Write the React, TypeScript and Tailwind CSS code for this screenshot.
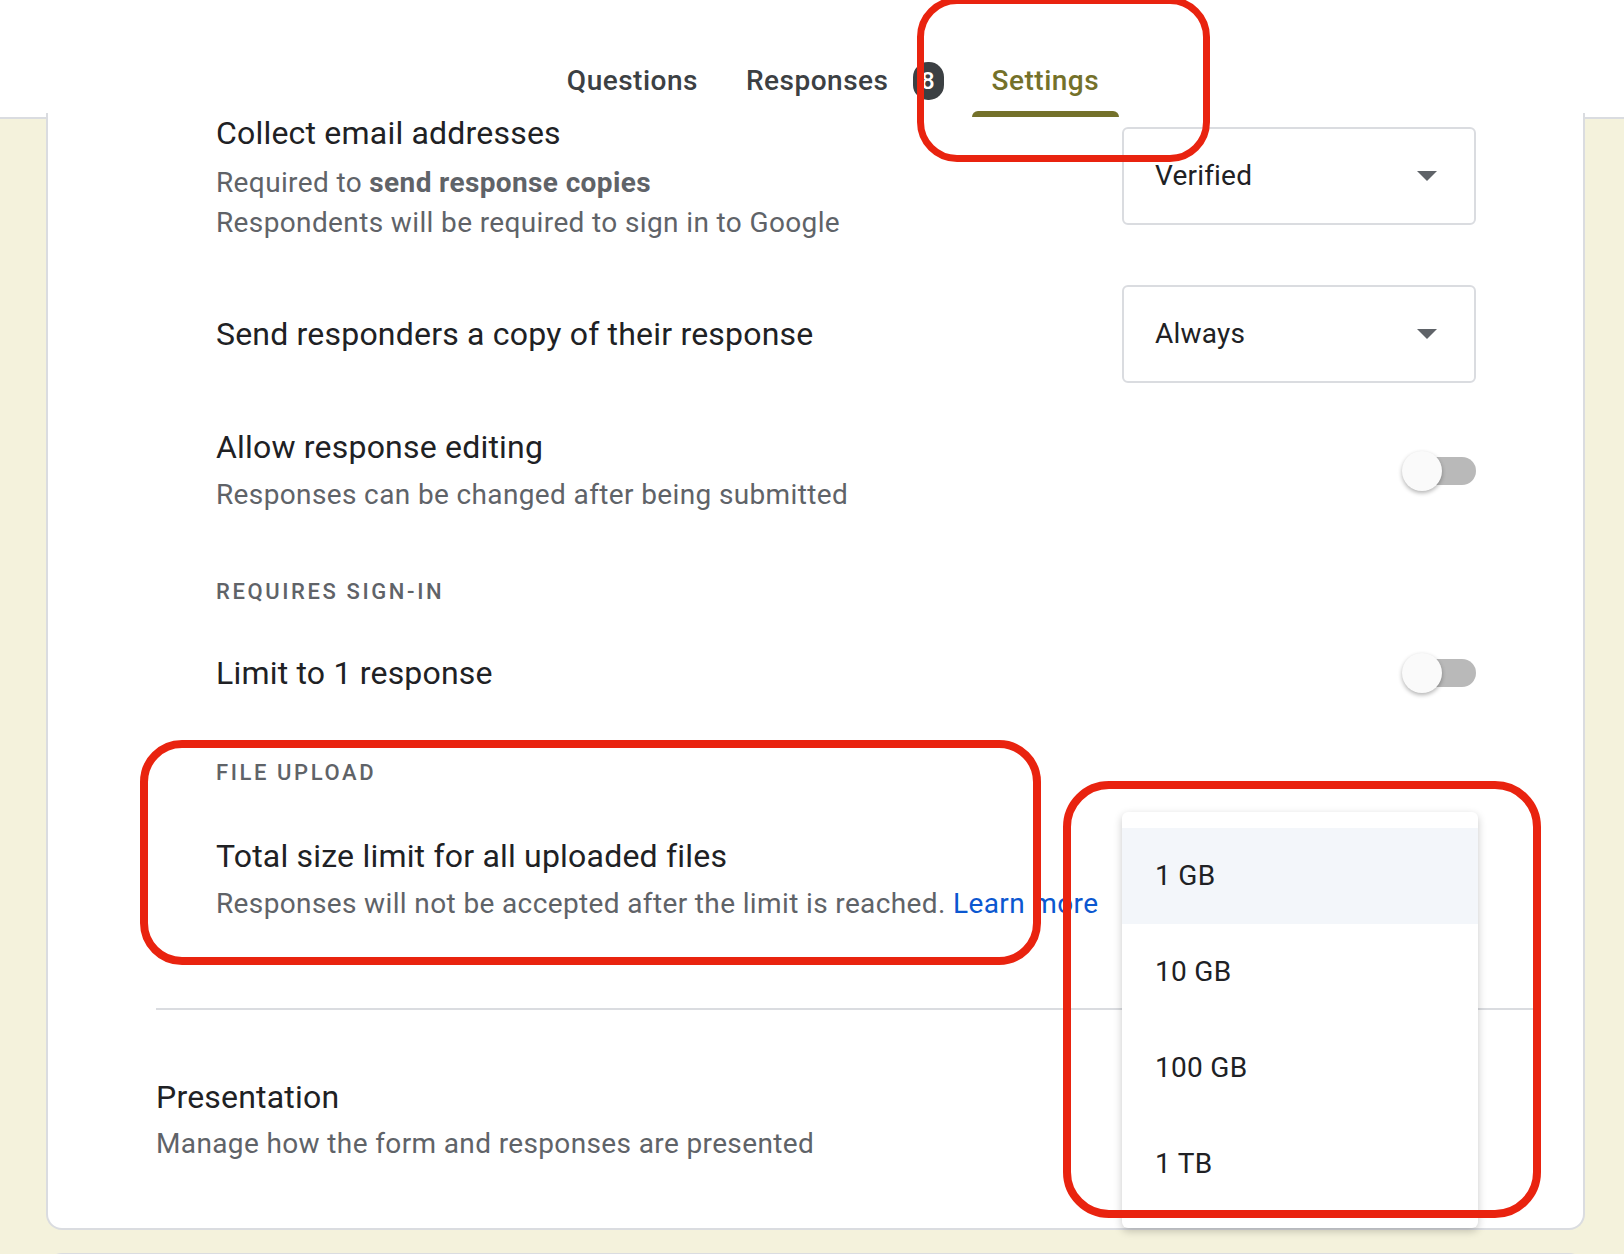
import React from "react";

function Dropdown({ value }: { value: string }) {
  return (
    <div className="flex h-[98px] w-[354px] items-center justify-between rounded-[6px] border-2 border-[#dadce0] bg-white pl-[31px] pr-[37px]">
      <span className="text-[28px] tracking-[0.2px] text-[#202124]">{value}</span>
      <svg width="20" height="10" viewBox="0 0 20 10">
        <path d="M0 0 L20 0 L10 10 Z" fill="#5f6368" />
      </svg>
    </div>
  );
}

function Toggle() {
  return (
    <div className="relative h-[40px] w-[74px] shrink-0">
      <div className="absolute left-[6px] top-[6px] h-[28px] w-[68px] rounded-full bg-[#b9b9b9]" />
      <div className="absolute left-0 top-0 h-[40px] w-[40px] rounded-full bg-[#fafafa] shadow-[0_2px_4px_rgba(0,0,0,0.3)]" />
    </div>
  );
}

function SectionLabel({ children, className }: { children: React.ReactNode; className: string }) {
  return (
    <div className={`text-[22px] font-medium uppercase leading-[30px] tracking-[2.6px] text-[#5f6368] ${className}`}>
      {children}
    </div>
  );
}

const title = "text-[32px] leading-[40px] tracking-[0.2px] text-[#202124]";
const sub = "text-[28px] leading-[40px] tracking-[0.37px] text-[#5f6368]";

const menuItems = ["1 GB", "10 GB", "100 GB", "1 TB"];

export default function App() {
  return (
    <div className="relative h-[1254px] overflow-hidden bg-[#f4f2dc] font-['Roboto',sans-serif]">
      {/* tab bar */}
      <header className="flex h-[119px] justify-center border-b-2 border-[#dadce0] bg-white">
        <nav className="ml-[42px] flex h-full items-stretch text-[28px] font-medium tracking-[0.5px] text-[#3c4043]">
          <div className="flex items-center pl-[20px] pr-[24px] pt-[44px]">Questions</div>
          <div className="flex items-center pl-[24px] pr-[28px] pt-[44px]">
            <span>Responses</span>
            <span className="ml-[24px] flex h-[38px] w-[31px] items-center justify-center rounded-[15px] bg-[#3c4043] text-[24px] text-white">
              8
            </span>
          </div>
          <div className="relative flex items-center px-[20px] pt-[44px] text-[#74712a]">
            Settings
            <div className="absolute bottom-0 left-0 right-0 h-[6px] rounded-t-[6px] bg-[#74712a]" />
          </div>
        </nav>
      </header>

      <div className="pl-[46px] pr-[39px]">
        <div className="rounded-b-[16px] border-2 border-t-0 border-[#dadce0] bg-white pb-[64px] pl-[108px] pr-[50px]">
          <div className="pl-[60px] pr-[57px]">
            {/* collect email */}
            <div className="-mt-[6px] flex items-start justify-between">
              <div>
                <div className={title}>Collect email addresses</div>
                <div className={`mt-[10px] ${sub}`}>
                  <div>
                    Required to <b className="font-bold">send response copies</b>
                  </div>
                  <div>Respondents will be required to sign in to Google</div>
                </div>
              </div>
              <div className="mt-[14px]">
                <Dropdown value="Verified" />
              </div>
            </div>

            <div className="mt-[42px] flex items-center justify-between">
              <div className={title}>Send responders a copy of their response</div>
              <Dropdown value="Always" />
            </div>

            <div className="mt-[44px] flex items-center justify-between">
              <div>
                <div className={title}>Allow response editing</div>
                <div className={`mt-[8px] ${sub}`}>Responses can be changed after being submitted</div>
              </div>
              <Toggle />
            </div>

            <SectionLabel className="mt-[62px]">Requires sign-in</SectionLabel>

            <div className="mt-[46px] flex items-center justify-between">
              <div className={title}>Limit to 1 response</div>
              <Toggle />
            </div>

            <SectionLabel className="mt-[65px]">File upload</SectionLabel>

            <div className="mt-[48px]">
              <div className={title}>Total size limit for all uploaded files</div>
              <div className={`mt-[8px] ${sub}`}>
                Responses will not be accepted after the limit is reached.{" "}
                <span className="text-[#0b57d0]">Learn more</span>
              </div>
            </div>
          </div>

          <div className="mt-[84px] h-[2px] bg-[#dadce0]" />

          <div className={`mt-[67px] ${title}`}>Presentation</div>
          <div className={`mt-[7px] ${sub}`}>Manage how the form and responses are presented</div>
        </div>

        <div className="mt-[23px] h-[60px] rounded-t-[16px] border-2 border-b-0 border-[#dadce0] bg-white" />
      </div>

      {/* open size menu */}
      <div className="absolute left-[1122px] top-[812px] w-[356px] rounded-[6px] bg-white py-[16px] shadow-[0_3px_8px_rgba(0,0,0,0.22)]">
        {menuItems.map((item, i) => (
          <div
            key={item}
            className={`flex h-[96px] items-center pl-[33px] text-[28px] tracking-[0.3px] text-[#202124] ${i === 0 ? "bg-[#f3f6fa]" : ""}`}
          >
            {item}
          </div>
        ))}
      </div>

      {/* annotations */}
      <div className="pointer-events-none absolute left-[917px] top-[-3px] h-[165px] w-[293px] rounded-[40px] border-[7px] border-[#e9230f]" />
      <div className="pointer-events-none absolute left-[140px] top-[740px] h-[225px] w-[901px] rounded-[42px] border-[8px] border-[#e9230f]" />
      <div className="pointer-events-none absolute left-[1063px] top-[781px] h-[437px] w-[478px] rounded-[46px] border-[8px] border-[#e9230f]" />
    </div>
  );
}
